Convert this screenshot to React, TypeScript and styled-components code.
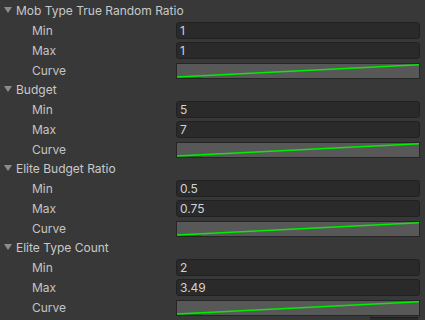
import styled, { createGlobalStyle } from "styled-components";

const GlobalStyle = createGlobalStyle`
  html, body {
    margin: 0;
    padding: 0;
    background: #383838;
    overflow: hidden;
  }
  body {
    font-family: Inter, "Noto Sans", "Liberation Sans", sans-serif;
    font-size: 12px;
    color: #c4c4c4;
  }
`;

type Range = {
  title: string;
  min: string;
  max: string;
};

const ranges: Range[] = [
  { title: "Mob Type True Random Ratio", min: "1", max: "1" },
  { title: "Budget", min: "5", max: "7" },
  { title: "Elite Budget Ratio", min: "0.5", max: "0.75" },
  { title: "Elite Type Count", min: "2", max: "3.49" },
];

const Inspector = styled.div`
  width: 425px;
  height: 320px;
  overflow: hidden;
  display: flex;
  flex-direction: column;
`;

const Group = styled.div`
  display: flex;
  flex-direction: column;
`;

const Header = styled.div`
  height: 19px;
  display: flex;
  align-items: center;
  gap: 4px;
  padding-left: 4px;
  padding-top: 1px;
  box-sizing: border-box;
  color: #c8c8c8;
`;

const Arrow = styled.span`
  width: 0;
  height: 0;
  border-left: 4px solid transparent;
  border-right: 4px solid transparent;
  border-top: 6px solid #8c8c8c;
`;

const Row = styled.div`
  height: 20px;
  display: flex;
  align-items: flex-end;
  padding-right: 5px;
  box-sizing: border-box;
`;

const Label = styled.div`
  width: 176px;
  padding-left: 32px;
  box-sizing: border-box;
  align-self: stretch;
  display: flex;
  align-items: center;
  padding-top: 3px;
  color: #c4c4c4;
`;

const Field = styled.div`
  flex: 1;
  height: 17px;
  box-sizing: border-box;
  background: #2a2a2a;
  border: 1px solid #212121;
  border-radius: 3px;
  display: flex;
  align-items: center;
  padding-left: 3px;
  color: #d2d2d2;
`;

const CurveBox = styled.div`
  flex: 1;
  height: 16px;
  box-sizing: border-box;
  background: #585858;
  border: 1px solid #252525;
  display: flex;
`;

const Tail = styled.div`
  height: 4px;
  display: flex;
  justify-content: flex-end;
  align-items: flex-end;
  padding-right: 7px;
`;

const TailField = styled.div`
  width: 48px;
  height: 2px;
  background: #2a2a2a;
  border-top: 1px solid #1e1e1e;
`;

const Curve = () => (
  <CurveBox>
    <svg width="100%" height="100%" viewBox="0 0 242 14" preserveAspectRatio="none">
      <line x1="0" y1="13.5" x2="25" y2="13.5" stroke="#1d6b1d" strokeWidth="1" />
      <line x1="0" y1="13" x2="242" y2="0.8" stroke="#00ee00" strokeWidth="1.6" />
    </svg>
  </CurveBox>
);

const App = () => {
  return (
    <Inspector>
      <GlobalStyle />
      {ranges.map((r) => (
        <Group key={r.title}>
          <Header>
            <Arrow />
            {r.title}
          </Header>
          <Row>
            <Label>Min</Label>
            <Field>{r.min}</Field>
          </Row>
          <Row>
            <Label>Max</Label>
            <Field>{r.max}</Field>
          </Row>
          <Row>
            <Label>Curve</Label>
            <Curve />
          </Row>
        </Group>
      ))}
      <Tail>
        <TailField />
      </Tail>
    </Inspector>
  );
};

export default App;
